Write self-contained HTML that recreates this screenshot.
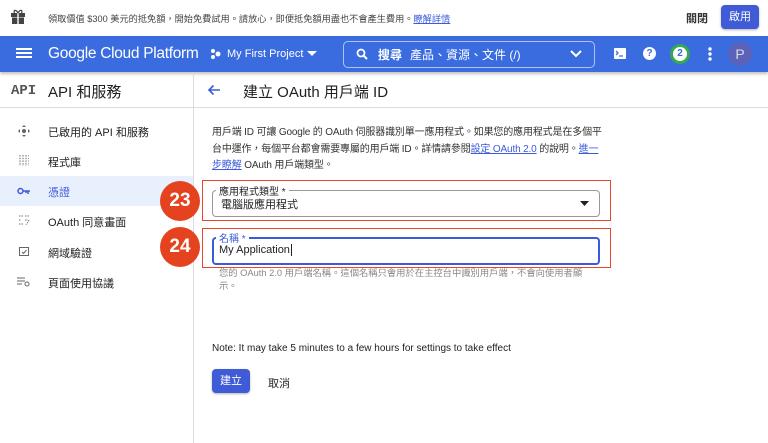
<!DOCTYPE html>
<html><head><meta charset="utf-8">
<style>
*{box-sizing:border-box;margin:0;padding:0}
body{width:768px;height:443px;overflow:hidden;background:#fff;font-family:"Liberation Sans","Noto Sans CJK TC",sans-serif;color:#202124;position:relative}
.a{position:absolute;white-space:nowrap}
.side{font-size:11px;color:#202124}
</style></head><body>
<div class="a" style="left:0;top:0;width:768px;height:36px;background:#fff"></div>
<svg class="a" style="left:10px;top:9px" width="16" height="16" viewBox="0 0 16 16"><rect x="1" y="4" width="14" height="4" fill="#444"/><rect x="2" y="8.5" width="12" height="6.5" fill="#444"/><rect x="7.3" y="4" width="1.4" height="11" fill="#fff"/><path d="M8 4C6 0 3 1 4.5 4M8 4c2-4 5-3 3.5 0" stroke="#444" stroke-width="1.3" fill="none"/></svg>
<div class="a" style="left:48px;top:11px;font-size:9.2px;color:#444">領取價值 $300 美元的抵免額，開始免費試用。請放心，即便抵免額用盡也不會產生費用。<span style="color:#3b5bdb;text-decoration:underline">瞭解詳情</span></div>
<div class="a" style="left:686px;top:10px;font-size:11px;font-weight:bold;color:#333">關閉</div>
<div class="a" style="left:721px;top:5px;width:38px;height:24px;background:#3f5bd6;border-radius:4px;color:#fff;font-size:11px;text-align:center;line-height:24px;box-shadow:0 1px 2px rgba(0,0,0,.3)">啟用</div>
<div class="a" style="left:0;top:36px;width:768px;height:36px;background:#3a6ce0;box-shadow:0 2px 3px rgba(0,0,0,.25)"></div>
<svg class="a" style="left:16px;top:47px" width="16" height="12"><rect y="1" width="16" height="2" fill="#fff"/><rect y="5" width="16" height="2" fill="#fff"/><rect y="9" width="16" height="2" fill="#fff"/></svg>
<div class="a" style="left:48px;top:45px;font-size:15.5px;color:#fff;letter-spacing:-0.3px">Google Cloud Platform</div>
<svg class="a" style="left:210px;top:48px" width="12" height="12"><circle cx="3" cy="3" r="2" fill="#fff"/><circle cx="8" cy="6" r="2.5" fill="#fff"/><circle cx="3" cy="9" r="2" fill="#fff"/></svg>
<div class="a" style="left:227px;top:48px;font-size:11px;color:#fff">My First Project</div>
<svg class="a" style="left:307px;top:51px" width="10" height="6"><path d="M0 0h10L5 5z" fill="#fff"/></svg>
<div class="a" style="left:343px;top:41px;width:252px;height:27px;border:1px solid rgba(255,255,255,.6);border-radius:5px"></div>
<svg class="a" style="left:356px;top:48px" width="12" height="12"><circle cx="5" cy="5" r="3.5" stroke="#fff" stroke-width="1.8" fill="none"/><path d="M7.5 7.5l3.5 3.5" stroke="#fff" stroke-width="2"/></svg>
<div class="a" style="left:378px;top:46px;font-size:12px;color:#fff;font-weight:bold">搜尋</div>
<div class="a" style="left:410px;top:46px;font-size:12px;color:#fff">產品、資源、文件 (/)</div>
<svg class="a" style="left:570px;top:50px" width="12" height="8"><path d="M1 1l5 5 5-5" stroke="#fff" stroke-width="2" fill="none"/></svg>
<svg class="a" style="left:614px;top:48px" width="12" height="11"><rect width="12" height="11" rx="1" fill="#fff"/><path d="M2 3l2 2-2 2M5 8h4" stroke="#3a6ce0" stroke-width="1.3" fill="none"/></svg>
<div class="a" style="left:643px;top:47px;width:13px;height:13px;border-radius:50%;background:#fff;color:#3a6ce0;font-size:10px;font-weight:bold;text-align:center;line-height:13px">?</div>
<div class="a" style="left:670px;top:44px;width:20px;height:20px;border-radius:50%;background:#fff;border:3px solid #34a853;color:#3a6ce0;font-size:10px;font-weight:bold;text-align:center;line-height:14px">2</div>
<svg class="a" style="left:708px;top:46px" width="4" height="16"><circle cx="2" cy="3" r="1.7" fill="#fff"/><circle cx="2" cy="8" r="1.7" fill="#fff"/><circle cx="2" cy="13" r="1.7" fill="#fff"/></svg>
<div class="a" style="left:728px;top:42px;width:24px;height:24px;border-radius:50%;background:#5a63b9;color:#ddd;font-size:14px;text-align:center;line-height:24px">P</div>
<div class="a" style="left:0;top:107px;width:768px;height:1px;background:#dadce0"></div>
<div class="a" style="left:193px;top:72px;width:1px;height:371px;background:#dadce0"></div>
<div class="a" style="left:11px;top:83px;font-family:'Liberation Mono',monospace;font-weight:bold;font-size:14px;color:#555">API</div>
<div class="a" style="left:48px;top:81px;font-size:15px">API 和服務</div>
<svg class="a" style="left:207px;top:84px" width="14" height="12"><path d="M13 6H2M6.5 1.5L2 6l4.5 4.5" stroke="#3b5bdb" stroke-width="1.6" fill="none"/></svg>
<div class="a" style="left:243px;top:81px;font-size:15px">建立 OAuth 用戶端 ID</div>
<div class="a" style="left:0;top:176px;width:193px;height:30px;background:#e8effd"></div>
<svg class="a" style="left:18px;top:125px" width="12" height="12"><circle cx="6" cy="6" r="2" fill="#666"/><path d="M6 0l2 2H4zM6 12l2-2H4zM0 6l2-2v4zM12 6l-2-2v4z" fill="#666"/></svg>
<div class="a side" style="left:48px;top:124px">已啟用的 API 和服務</div>
<svg class="a" style="left:19px;top:155px" width="10" height="11"><path d="M1 0v11M4 0v11M7 0v11M10 0v11" stroke="#666" stroke-dasharray="1.5 1.2"/></svg>
<div class="a side" style="left:48px;top:154px">程式庫</div>
<svg class="a" style="left:17px;top:187px" width="14" height="8"><circle cx="3.5" cy="4" r="2.5" stroke="#3b5bdb" stroke-width="1.5" fill="none"/><path d="M6 4h7M11 4v3M9 4v2" stroke="#3b5bdb" stroke-width="1.5"/></svg>
<div class="a side" style="left:48px;top:184px;color:#3b5bdb">憑證</div>
<svg class="a" style="left:19px;top:215px" width="11" height="10"><path d="M0 1h4M0 5h2M0 9h4M6 1h4M6 5l3 0M10 5l-3 5" stroke="#777" stroke-width="1" stroke-dasharray="1.5 1"/></svg>
<div class="a side" style="left:48px;top:214px">OAuth 同意畫面</div>
<svg class="a" style="left:19px;top:246px" width="10" height="10"><rect x=".5" y="1.5" width="9" height="8" stroke="#666" fill="none"/><path d="M3 6l1.5 1.5L7.5 4" stroke="#666" fill="none"/></svg>
<div class="a side" style="left:48px;top:245px">網域驗證</div>
<svg class="a" style="left:17px;top:277px" width="14" height="10"><path d="M0 1h8M0 4h8M0 7h5" stroke="#666"/><circle cx="10" cy="7" r="2" stroke="#666" fill="none"/></svg>
<div class="a" style="left:48px;top:275px;font-size:11px">頁面使用協議</div>
<div class="a" style="left:212px;top:125px;font-size:10px;letter-spacing:-0.15px;line-height:16.5px;color:#333">用戶端 ID 可讓 Google 的 OAuth 伺服器識別單一應用程式。如果您的應用程式是在多個平<br>台中運作，每個平台都會需要專屬的用戶端 ID。詳情請參閱<span style="color:#3b5bdb;text-decoration:underline">設定 OAuth 2.0</span> 的說明。<span style="color:#3b5bdb;text-decoration:underline">進一<br>步瞭解</span> OAuth 用戶端類型。</div>
<div class="a" style="left:202px;top:180px;width:409px;height:41px;border:1.5px solid #e8472a"></div>
<div class="a" style="left:212px;top:190px;width:388px;height:27px;border:1px solid #999;border-radius:4px"></div>
<div class="a" style="left:216px;top:183px;padding:0 3px;background:#fff;font-size:10px;color:#222">應用程式類型 *</div>
<div class="a" style="left:221px;top:196px;font-size:11px">電腦版應用程式</div>
<svg class="a" style="left:580px;top:201px" width="9" height="5"><path d="M0 0h9L4.5 5z" fill="#222"/></svg>
<div class="a" style="left:202px;top:228px;width:409px;height:40px;border:1.5px solid #e8472a"></div>
<div class="a" style="left:212px;top:237px;width:388px;height:28px;border:2px solid #3b5bdb;border-radius:4px"></div>
<div class="a" style="left:216px;top:230px;padding:0 3px;background:#fff;font-size:10px;color:#3b5bdb">名稱 *</div>
<div class="a" style="left:219px;top:244px;font-size:11px">My Application<span style="border-left:1px solid #222;margin-left:1px"></span></div>
<div class="a" style="left:219px;top:267px;width:365px;white-space:normal;font-size:9.3px;line-height:13px;color:#888">您的 OAuth 2.0 用戶端名稱。這個名稱只會用於在主控台中識別用戶端，不會向使用者顯示。</div>
<div class="a" style="left:160px;top:181px;width:40px;height:40px;border-radius:50%;background:#e5431f;color:#fff;font-size:19px;font-weight:bold;text-align:center;line-height:40px">23</div>
<div class="a" style="left:160px;top:227px;width:40px;height:40px;border-radius:50%;background:#e5431f;color:#fff;font-size:19px;font-weight:bold;text-align:center;line-height:40px">24</div>
<div class="a" style="left:212px;top:343px;font-size:10px;color:#222">Note: It may take 5 minutes to a few hours for settings to take effect</div>
<div class="a" style="left:212px;top:369px;width:38px;height:24px;background:#3f5bd6;border-radius:4px;color:#fff;font-size:11px;text-align:center;line-height:24px;box-shadow:0 1px 2px rgba(0,0,0,.3)">建立</div>
<div class="a" style="left:268px;top:375px;font-size:11px;color:#222">取消</div>
</body></html>
